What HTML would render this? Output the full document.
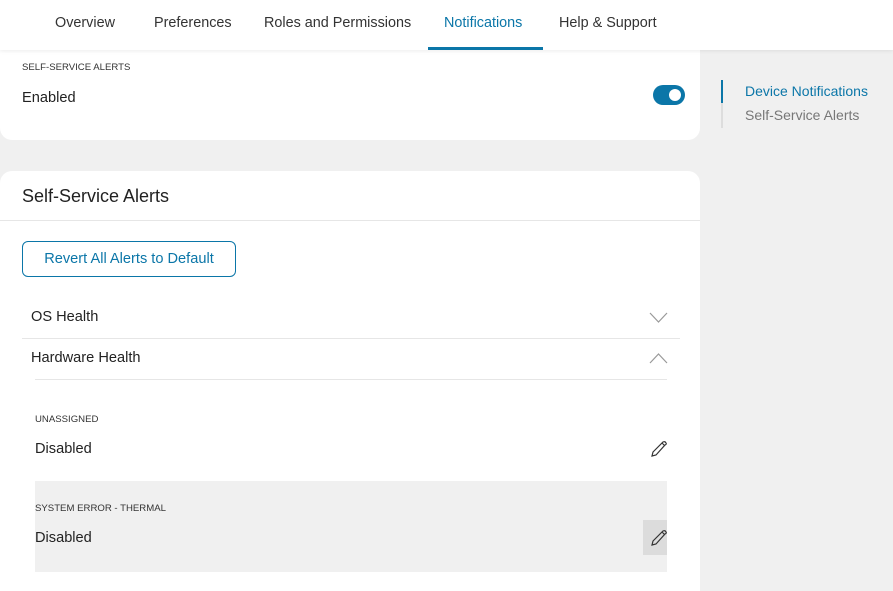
<!DOCTYPE html>
<html><head><style>
*{margin:0;padding:0;box-sizing:border-box}
body{width:893px;height:572px;overflow:hidden;background:#f0f0f0;font-family:"Liberation Sans",sans-serif;color:#222;position:relative}
.nav{position:absolute;left:0;top:0;width:893px;height:50px;background:#fff;box-shadow:0 1px 4px rgba(0,0,0,.08);z-index:2}
.nav span{position:absolute;top:15px;font-size:14.4px;color:#333;white-space:nowrap}
.nav .act{color:#0b76a8}
.ul{position:absolute;left:428px;top:47px;width:115px;height:3px;background:#0b76a8}
.card1{position:absolute;left:0;top:40px;width:700px;height:100px;background:#fff;border-radius:0 0 12px 12px}
.card2{position:absolute;left:0;top:171px;width:700px;height:420px;background:#fff;border-radius:12px 12px 0 0}
.lbl{position:absolute;font-size:9.6px;color:#333;letter-spacing:0}
.val{position:absolute;font-size:14.6px;color:#222}
.tog{position:absolute;left:653px;top:85px;width:32px;height:20px;border-radius:10px;background:#0b76a8}
.tog:after{content:"";position:absolute;right:4px;top:4px;width:12px;height:12px;border-radius:50%;background:#fff}
.side{position:absolute;left:721px;top:80px;width:2px;height:48px;background:#ddd}
.side:before{content:"";position:absolute;left:0;top:0;width:2px;height:23px;background:#0b76a8}
.sl{position:absolute;left:745px;font-size:14px;white-space:nowrap}
.hr{position:absolute;height:1px;background:#e6e6e6}
.btn{position:absolute;left:22px;top:241px;width:214px;height:36px;border:1px solid #0b76a8;border-radius:6px;color:#0b76a8;font-size:14.6px;text-align:center;line-height:35px}
.grey{position:absolute;left:35px;top:481px;width:632px;height:91px;background:#f0f0f0}
.pbg{position:absolute;left:643px;top:520px;width:24px;height:35px;background:#dcdcdc}
</style></head><body>
<div class="nav">
<span style="left:55px">Overview</span>
<span style="left:154px">Preferences</span>
<span style="left:264px">Roles and Permissions</span>
<span class="act" style="left:444px">Notifications</span>
<span style="left:559px">Help &amp; Support</span>
<div class="ul"></div>
</div>
<div class="card1"></div>
<div class="lbl" style="left:22px;top:62px">SELF-SERVICE ALERTS</div>
<div class="val" style="left:22px;top:90px">Enabled</div>
<div class="tog"></div>
<div class="side"></div>
<div class="sl" style="top:83px;color:#0b76a8">Device Notifications</div>
<div class="sl" style="top:107px;color:#777">Self-Service Alerts</div>

<div class="card2"></div>
<div class="val" style="left:22px;top:186px;font-size:18px">Self-Service Alerts</div>
<div class="hr" style="left:0;top:220px;width:700px"></div>
<div class="btn">Revert All Alerts to Default</div>
<div class="val" style="left:31px;top:309px">OS Health</div>
<svg style="position:absolute;left:649px;top:312px" width="19" height="12"><path d="M1 1 L9.5 10 L18 1" fill="none" stroke="#999" stroke-width="1.2"/></svg>
<div class="hr" style="left:22px;top:338px;width:658px"></div>
<div class="val" style="left:31px;top:350px">Hardware Health</div>
<svg style="position:absolute;left:649px;top:352px" width="19" height="12"><path d="M1 11 L9.5 2 L18 11" fill="none" stroke="#999" stroke-width="1.2"/></svg>
<div class="hr" style="left:35px;top:379px;width:632px"></div>
<div class="lbl" style="left:35px;top:414px">UNASSIGNED</div>
<div class="val" style="left:35px;top:441px">Disabled</div>
<svg style="position:absolute;left:650px;top:440px" width="18" height="18"><path d="M2 16 L3 12 L13 2 Q15 1 16 3 Q17 4 15 5 L6 15 Z M12 3 L15 6" fill="none" stroke="#333" stroke-width="1.2"/></svg>
<div class="grey"></div>
<div class="pbg"></div>
<div class="lbl" style="left:35px;top:503px">SYSTEM ERROR - THERMAL</div>
<div class="val" style="left:35px;top:530px">Disabled</div>
<svg style="position:absolute;left:650px;top:529px" width="18" height="18"><path d="M2 16 L3 12 L13 2 Q15 1 16 3 Q17 4 15 5 L6 15 Z M12 3 L15 6" fill="none" stroke="#333" stroke-width="1.2"/></svg>
</body></html>
